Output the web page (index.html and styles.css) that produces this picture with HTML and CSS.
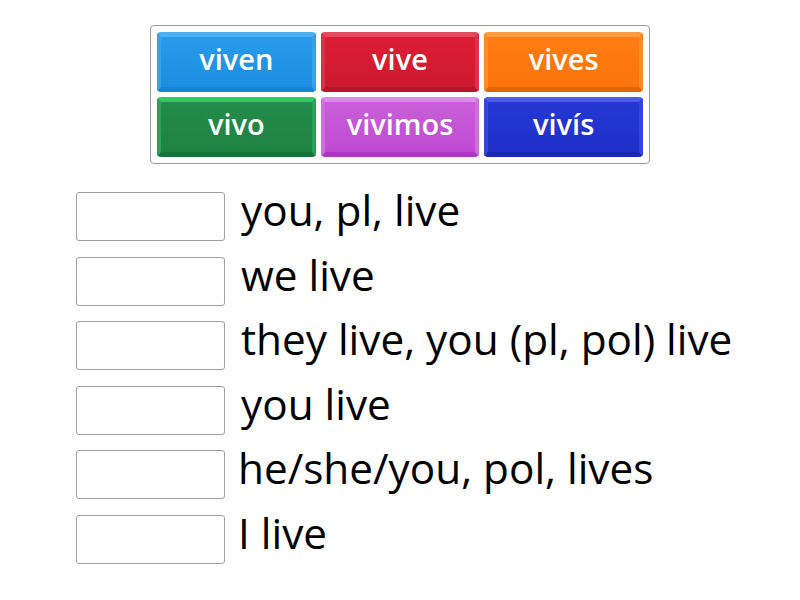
FILE: index.html
```html
<!DOCTYPE html>
<html lang="es">
  <head>
    <meta charset="UTF-8" />
    <meta name="viewport" content="width=device-width, initial-scale=1.0" />
    <title>Vivir</title>
    <link rel="stylesheet" href="styles.css">
  </head>
  <body>
    <section class="banco">
      <div class="ficha azul">viven</div>
      <div class="ficha rojo">vive</div>
      <div class="ficha naranja">vives</div>
      <div class="ficha verde">vivo</div>
      <div class="ficha morado">vivimos</div>
      <div class="ficha indigo">vivís</div>
    </section>

    <main class="lista">
      <div class="fila"><span class="hueco"></span><span class="pista">you, pl, live</span></div>
      <div class="fila"><span class="hueco"></span><span class="pista">we live</span></div>
      <div class="fila"><span class="hueco"></span><span class="pista">they live, you (pl, pol) live</span></div>
      <div class="fila"><span class="hueco"></span><span class="pista">you live</span></div>
      <div class="fila"><span class="hueco"></span><span class="pista corta">he/she/you, pol, lives</span></div>
      <div class="fila"><span class="hueco"></span><span class="pista corta">I live</span></div>
    </main>
  </body>
</html>
```

FILE: styles.css
```css
body {
  margin: 0;
  font-family: "Open Sans", "DejaVu Sans", sans-serif;
  background: #fff;
  color: #000;
}

.banco {
  width: 486px;
  margin: 25px auto 0;
  padding: 6px;
  border: 1px solid #9a9a9a;
  border-radius: 4px;
  display: grid;
  grid-template-columns: repeat(3, 1fr);
  gap: 5px;
}

.ficha {
  height: 42px;
  padding-bottom: 8px;
  border-radius: 4px;
  border-style: solid;
  border-width: 5px 4px 5px 4px;
  color: #fff;
  font-size: 29px;
  font-weight: 600;
  display: flex;
  align-items: center;
  justify-content: center;
  line-height: 1;
}

.azul {
  background: linear-gradient(#2a9bea, #1b8ee2);
  border-color: #4cb0f2 #34a2ec #1484d6 #34a2ec;
}

.rojo {
  background: linear-gradient(#dc1d35, #cc1a30);
  border-color: #e34b60 #de3046 #b8142a #de3046;
}

.naranja {
  background: linear-gradient(#ff7d12, #fb740c);
  border-color: #ff9a45 #ff8a2a #e36605 #ff8a2a;
}

.verde {
  background: linear-gradient(#238d4b, #1e8243);
  border-color: #2ecb67 #28a355 #1a7039 #28a355;
}

.morado {
  background: linear-gradient(#c960d8, #bf4ad2);
  border-color: #dc8ce6 #cf6edd #ad38c4 #cf6edd;
}

.indigo {
  background: linear-gradient(#2538d4, #2030c9);
  border-color: #4d5ee2 #3446d9 #1b28b2 #3446d9;
}

.lista {
  padding: 28px 0 0 76px;
  display: flex;
  flex-direction: column;
  gap: 15.5px;
}

.fila {
  display: flex;
  align-items: flex-start;
  gap: 16px;
  height: 49px;
}

.hueco {
  width: 147px;
  height: 47px;
  border: 1px solid #a0a0a0;
  border-radius: 3px;
  background: #fff;
}

.pista {
  font-size: 42.3px;
  line-height: 42px;
  margin-top: -3px;
}

.corta {
  margin-left: -3px;
}
```
